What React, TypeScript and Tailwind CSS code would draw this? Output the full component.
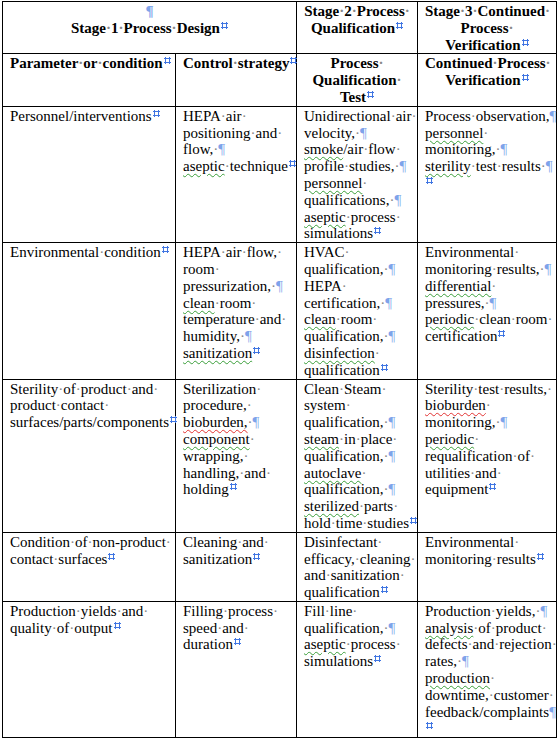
import React from "react";

type Cell = { lines: string[]; span?: number };

// {word} = green squiggle, [word] = red squiggle, · = space mark
const header1: Cell[] = [
  { lines: ["¶", "Stage·1·Process·Design¤"], span: 2 },
  { lines: ["Stage·2·Process·", "Qualification¤"] },
  { lines: ["Stage·3·Continued·", "Process·", "Verification¤"] },
];

const header2: Cell[] = [
  { lines: ["Parameter·or·condition¤"] },
  { lines: ["Control·strategy¤"] },
  { lines: ["Process·", "Qualification·", "Test¤"] },
  { lines: ["Continued·Process·", "Verification¤"] },
];

const rows: Cell[][] = [
  [
    { lines: ["Personnel/interventions¤"] },
    { lines: ["HEPA·air·", "positioning·and·", "flow,·¶", "{aseptic}·technique¤"] },
    {
      lines: [
        "Unidirectional·air·",
        "velocity,·¶",
        "{smoke}/air·flow·",
        "profile·studies,·¶",
        "{personnel}·",
        "qualifications,·¶",
        "{aseptic}·process·",
        "simulations¤",
      ],
    },
    { lines: ["Process·observation,¶", "{personnel}·", "monitoring,·¶", "{sterility}·test·results·¶", "¤"] },
  ],
  [
    { lines: ["Environmental·condition¤"] },
    {
      lines: [
        "HEPA·air·flow,·",
        "room·",
        "pressurization,·¶",
        "{clean}·room·",
        "temperature·and·",
        "humidity,·¶",
        "{sanitization}¤",
      ],
    },
    {
      lines: [
        "HVAC·",
        "qualification,·¶",
        "HEPA·",
        "certification,·¶",
        "{clean}·room·",
        "qualification,·¶",
        "{disinfection}·",
        "qualification¤",
      ],
    },
    {
      lines: [
        "Environmental·",
        "monitoring·results,·¶",
        "{differential}·",
        "pressures,·¶",
        "{periodic}·clean·room·",
        "certification¤",
      ],
    },
  ],
  [
    { lines: ["Sterility·of·product·and·", "product·contact·", "surfaces/parts/components¤"] },
    {
      lines: [
        "Sterilization·",
        "procedure,·",
        "[bioburden,]·¶",
        "{component}·",
        "wrapping,·",
        "handling,·and·",
        "holding¤",
      ],
    },
    {
      lines: [
        "Clean·Steam·",
        "system·",
        "qualification,·¶",
        "{steam}·in·place·",
        "qualification,·¶",
        "{autoclave}·",
        "qualification,·¶",
        "{sterilized}·parts·",
        "hold·time·studies¤",
      ],
    },
    {
      lines: [
        "Sterility·test·results,·",
        "[bioburden]·",
        "monitoring,·¶",
        "{periodic}·",
        "requalification·of·",
        "utilities·and·",
        "equipment¤",
      ],
    },
  ],
  [
    { lines: ["Condition·of·non-product·", "contact·surfaces¤"] },
    { lines: ["Cleaning·and·", "sanitization¤"] },
    { lines: ["Disinfectant·", "efficacy,·cleaning·", "and·sanitization·", "qualification¤"] },
    { lines: ["Environmental·", "monitoring·results¤"] },
  ],
  [
    { lines: ["Production·yields·and·", "quality·of·output¤"] },
    { lines: ["Filling·process·", "speed·and·", "duration¤"] },
    { lines: ["Fill·line·", "qualification,·¶", "{aseptic}·process·", "simulations¤"] },
    {
      lines: [
        "Production·yields,·¶",
        "{analysis}·of·product·",
        "defects·and·rejection·",
        "rates,·¶",
        "{production}·",
        "downtime,·customer·",
        "feedback/complaints¶",
        "¤",
      ],
    },
  ],
];

const CellMark = () => (
  <svg width="7" height="7" viewBox="0 0 7 7" className="inline-block align-[4px] ml-[1px]">
    <path d="M0 1.5H7M0 5.5H7M1.5 0V7M5.5 0V7" stroke="#3f75e2" strokeWidth="1" fill="none" />
  </svg>
);

const Line = ({ text }: { text: string }) => {
  const parts = text.split(/(\{[^}]+\}|\[[^\]]+\]|·|¶|¤)/).filter(Boolean);
  return (
    <div className="whitespace-nowrap">
      {parts.map((p, i) => {
        if (p === "·") return <span key={i} className="text-[#888]">·</span>;
        if (p === "¶") return <span key={i} className="text-[#7ea3ea]">¶</span>;
        if (p === "¤") return <CellMark key={i} />;
        if (p.startsWith("{"))
          return (
            <span key={i} className="underline decoration-wavy decoration-[#3a9e3a] decoration-1 underline-offset-[2px]">
              {p.slice(1, -1)}
            </span>
          );
        if (p.startsWith("["))
          return (
            <span key={i} className="underline decoration-wavy decoration-[#e23232] decoration-1 underline-offset-[2px]">
              {p.slice(1, -1)}
            </span>
          );
        return <span key={i}>{p}</span>;
      })}
    </div>
  );
};

const td = "border border-black align-top px-[7px] pt-[1px] pb-0";

export default function App() {
  return (
    <div className="min-h-screen bg-white pt-[1px] pl-[2px] [font-family:'Liberation_Serif','Times_New_Roman',serif] text-[15px] leading-[16.8px] text-black">
      <table className="table-fixed border-collapse w-[554px]">
        <colgroup>
          <col className="w-[173px]" />
          <col className="w-[121px]" />
          <col className="w-[121px]" />
          <col className="w-[139px]" />
        </colgroup>
        <thead>
          {[header1, header2].map((row, r) => (
            <tr key={r}>
              {row.map((c, i) => (
                <th key={i} colSpan={c.span} className={`${td} text-center font-bold`}>
                  {c.lines.map((l, j) => (
                    <Line key={j} text={l} />
                  ))}
                </th>
              ))}
            </tr>
          ))}
        </thead>
        <tbody>
          {rows.map((row, r) => (
            <tr key={r}>
              {row.map((c, i) => (
                <td key={i} className={`${td} text-left`}>
                  {c.lines.map((l, j) => (
                    <Line key={j} text={l} />
                  ))}
                </td>
              ))}
            </tr>
          ))}
        </tbody>
      </table>
    </div>
  );
}
